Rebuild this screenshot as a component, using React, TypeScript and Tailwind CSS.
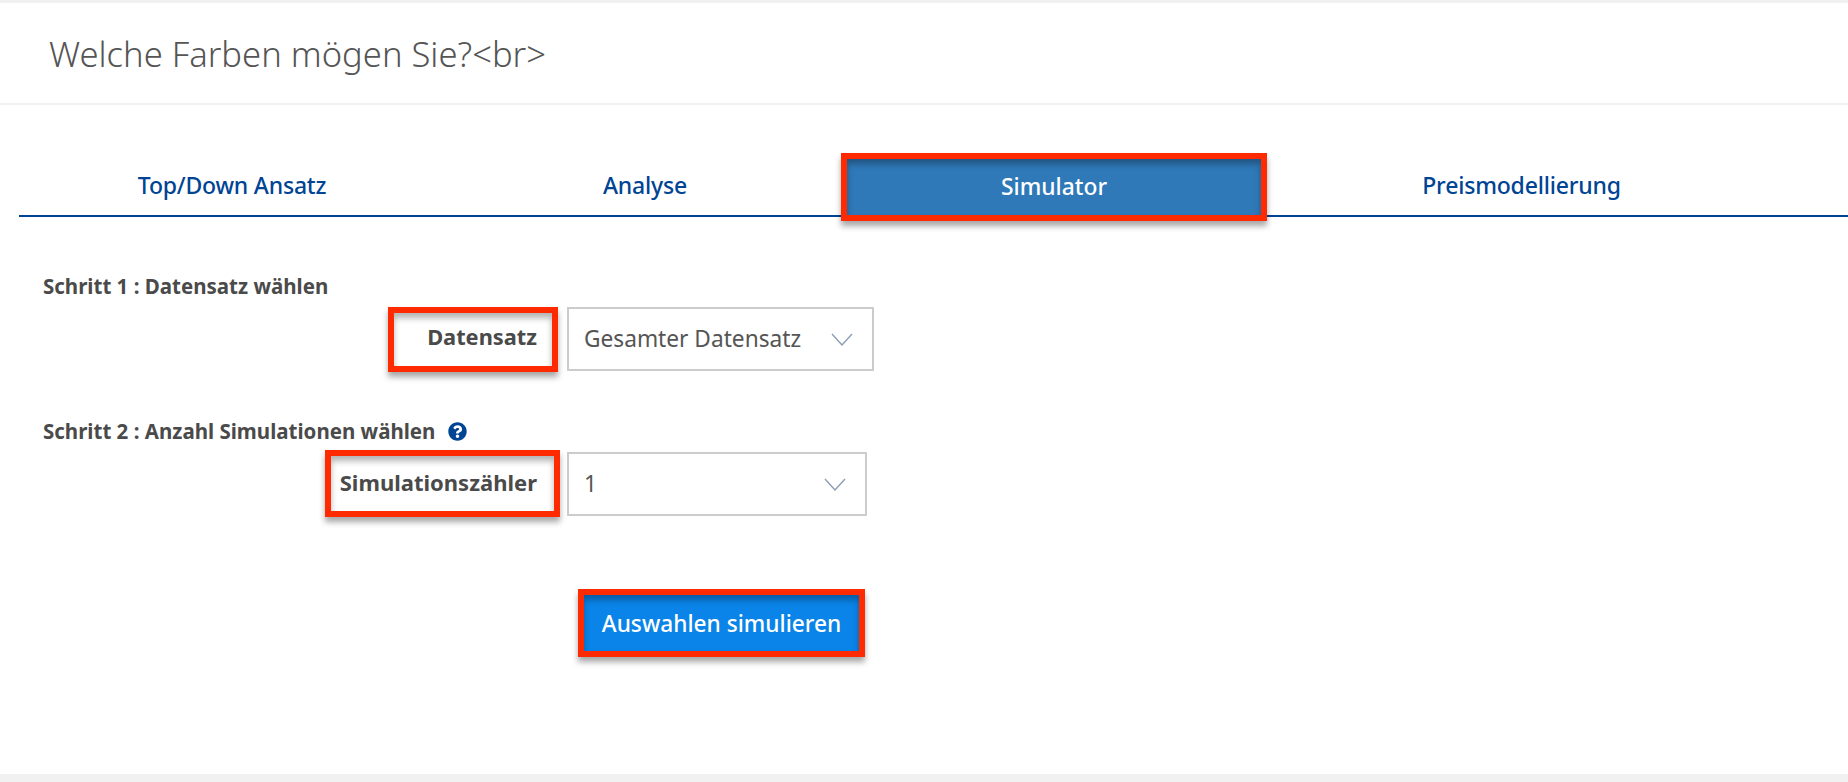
import { FaQuestionCircle } from "react-icons/fa";

const marked = "border-[6px] border-[#ff2a00] shadow-[0_5px_6px_rgba(0,0,0,0.35),inset_0_5px_6px_rgba(0,0,0,0.3)]";

function Chevron() {
  return (
    <svg width="22" height="13" viewBox="0 0 22 13" fill="none" className="shrink-0">
      <path d="M1 1l10 11L21 1" stroke="#8c9db8" strokeWidth="1.4" />
    </svg>
  );
}

function Select({ value, width }: { value: string; width: string }) {
  return (
    <div className={`flex h-[64px] items-center justify-between border-2 border-[#cccccc] pl-[15px] pr-[19px] text-[22.7px] text-[#555555] ${width}`}>
      <span>{value}</span>
      <Chevron />
    </div>
  );
}

function Tab({ label, className }: { label: string; className: string }) {
  return <div className={`flex h-[62px] items-center justify-center pt-[2px] text-[23px] font-medium tracking-[-0.2px] text-[#004494] ${className}`}>{label}</div>;
}

export default function App() {
  return (
    <div className="flex h-[782px] flex-col bg-white font-['Noto_Sans',sans-serif]">
      <div className="h-[3px] bg-[#f1f1f1]" />
      <header className="flex h-[102px] items-center border-b-2 border-[#f0f0f5] pl-[49px] pt-[2px] text-[34.6px] font-light text-[#555555]">
        Welche Farben mögen Sie?&lt;br&gt;
      </header>

      <main className="flex-1">
        <nav className="ml-[19px] mt-[48px] flex items-start border-b-2 border-[#004494]">
          <Tab label="Top/Down Ansatz" className="w-[426px]" />
          <Tab label="Analyse" className="w-[396px] pl-[4px]" />
          <div className={`relative -mb-[6px] flex h-[68px] w-[426px] items-center justify-center bg-[#2f79b9] text-[22.8px] font-medium text-white ${marked}`}>
            Simulator
          </div>
          <Tab label="Preismodellierung" className="ml-[10px] w-[489px]" />
        </nav>

        <section className="pl-[43px] pt-[56px] text-[#4a4a4a]">
          <h2 className="text-[20.5px] leading-[26px] font-bold">Schritt 1 : Datensatz wählen</h2>
          <div className="mt-[8px] flex items-start">
            <div className="flex w-[515px] justify-end">
              <label className={`flex h-[65px] w-[170px] items-center justify-end pr-[15px] pb-[4px] text-[21.8px] font-bold ${marked}`}>Datensatz</label>
            </div>
            <div className="ml-[9px]"><Select value="Gesamter Datensatz" width="w-[307px]" /></div>
          </div>

          <h2 className="mt-[46px] flex items-center text-[20.5px] leading-[26px] font-bold">
            Schritt 2 : Anzahl Simulationen wählen
            <FaQuestionCircle className="ml-[13px] text-[19px] text-[#004494]" />
          </h2>
          <div className="mt-[6px] flex items-start">
            <div className="flex w-[517px] justify-end">
              <label className={`flex h-[67px] w-[235px] items-center justify-end pr-[17px] pb-[2px] text-[22px] font-bold ${marked}`}>Simulationszähler</label>
            </div>
            <div className="ml-[7px] mt-[2px]"><Select value="1" width="w-[300px]" /></div>
          </div>

          <button className={`ml-[535px] mt-[72px] flex h-[68px] w-[287px] items-center justify-center bg-[#0a84e8] pt-[2px] text-[22.7px] font-medium text-white ${marked}`}>
            Auswahlen simulieren
          </button>
        </section>
      </main>

      <div className="h-[8px] bg-[#f1f1f1]" />
    </div>
  );
}
